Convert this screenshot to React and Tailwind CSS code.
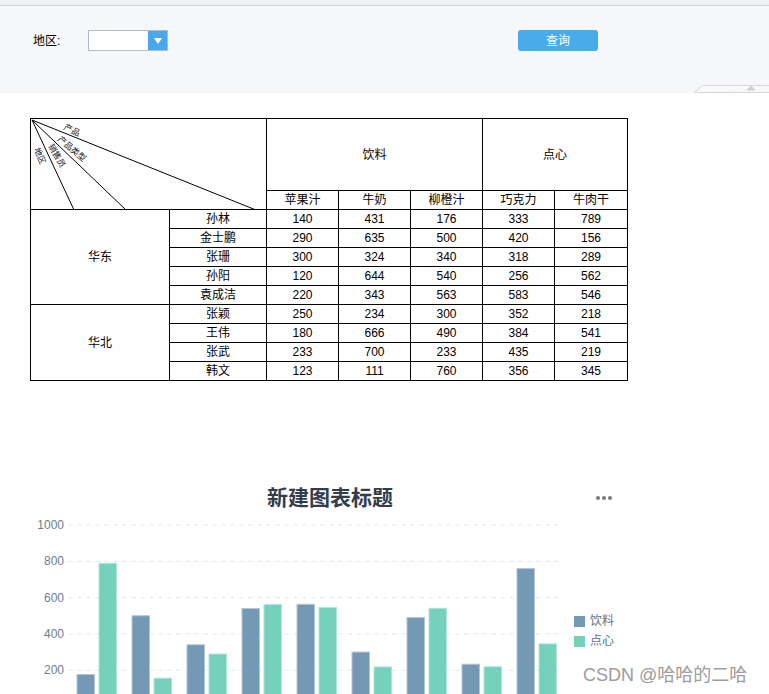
import React from 'react';

const FONT = { fontFamily: '"Liberation Sans", "Noto Sans CJK SC", sans-serif' };

const products = ['苹果汁', '牛奶', '柳橙汁', '巧克力', '牛肉干'];

const regions = [
  {
    name: '华东',
    rows: [
      ['孙林', 140, 431, 176, 333, 789],
      ['金士鹏', 290, 635, 500, 420, 156],
      ['张珊', 300, 324, 340, 318, 289],
      ['孙阳', 120, 644, 540, 256, 562],
      ['袁成洁', 220, 343, 563, 583, 546],
    ],
  },
  {
    name: '华北',
    rows: [
      ['张颖', 250, 234, 300, 352, 218],
      ['王伟', 180, 666, 490, 384, 541],
      ['张武', 233, 700, 233, 435, 219],
      ['韩文', 123, 111, 760, 356, 345],
    ],
  },
];

// chart series: 柳橙汁 -> 饮料, 牛肉干 -> 点心
const drinks = [176, 500, 340, 540, 563, 300, 490, 233, 760];
const snacks = [789, 156, 289, 562, 546, 218, 541, 219, 345];

const ZERO = 194.5;
const SCALE = 0.1815;

function DiagonalHeader() {
  return (
    <svg className="absolute inset-0" width="236" height="91" viewBox="0 0 236 91">
      <line x1="1" y1="1" x2="43" y2="91" stroke="#000" strokeWidth="1" />
      <line x1="1" y1="1" x2="95" y2="91" stroke="#000" strokeWidth="1" />
      <line x1="1" y1="1" x2="225" y2="91" stroke="#000" strokeWidth="1" />
      <g fontSize="8.5" fill="#111" style={FONT}>
        <text x="32" y="10" transform="rotate(26 32 10)">产品</text>
        <text x="26" y="21" transform="rotate(40 26 21)">产品类型</text>
        <text x="17" y="27" transform="rotate(60 17 27)">销售员</text>
        <text x="3" y="30" transform="rotate(68 3 30)">地区</text>
      </g>
    </svg>
  );
}

function DataTable() {
  const cell = 'border border-black text-center p-0';
  return (
    <table className="ml-[30px] mt-[25px] border-collapse table-fixed text-[12px] text-black" style={FONT}>
      <colgroup>
        <col className="w-[139px]" />
        <col className="w-[97px]" />
        <col className="w-[72px]" />
        <col className="w-[72px]" />
        <col className="w-[72px]" />
        <col className="w-[72px]" />
        <col className="w-[73px]" />
      </colgroup>
      <tbody>
        <tr className="h-[72px]">
          <td rowSpan={2} colSpan={2} className={`${cell} relative`}>
            <DiagonalHeader />
          </td>
          <td colSpan={3} className={cell}>饮料</td>
          <td colSpan={2} className={cell}>点心</td>
        </tr>
        <tr className="h-[19px]">
          {products.map((p) => (
            <td key={p} className={cell}>{p}</td>
          ))}
        </tr>
        {regions.map((r) =>
          r.rows.map((row, i) => (
            <tr key={row[0]} className="h-[19px]">
              {i === 0 && (
                <td rowSpan={r.rows.length} className={cell}>{r.name}</td>
              )}
              {row.map((v, j) => (
                <td key={j} className={`${cell} leading-[17px]`}>{v}</td>
              ))}
            </tr>
          ))
        )}
      </tbody>
    </table>
  );
}

function BarChart() {
  const ticks = [1000, 800, 600, 400, 200];
  return (
    <svg width="570" height="200" viewBox="0 0 570 200" className="shrink-0">
      {ticks.map((t) => {
        const y = ZERO - t * SCALE;
        return (
          <g key={t}>
            <line x1="68" y1={y} x2="563" y2={y} stroke="#e3e9f0" strokeWidth="1" strokeDasharray="5 4" />
            <text x="64" y={y + 4} textAnchor="end" fontSize="12" fill="#6e7d8c" style={FONT}>
              {t}
            </text>
          </g>
        );
      })}
      {drinks.map((d, i) => {
        const x = 77 + i * 55;
        const hd = d * SCALE;
        const hs = snacks[i] * SCALE;
        return (
          <g key={i}>
            <rect x={x} y={ZERO - hd} width="17.5" height={hd} fill="#7499b4" stroke="#b3c6d5" strokeWidth="1" />
            <rect x={x + 22} y={ZERO - hs} width="17.5" height={hs} fill="#75d1bb" stroke="#aee6d8" strokeWidth="1" />
          </g>
        );
      })}
    </svg>
  );
}

export default function App() {
  return (
    <div className="relative w-[769px] h-[694px] overflow-hidden bg-white" style={FONT}>
      <div className="h-[6px] bg-[#f0f1f5] border-b border-[#cfd0d5]" />
      <div className="relative h-[87px] bg-[#f6f7f9]">
        <div className="flex items-center pt-[24px] text-[12px]">
          <span className="ml-[33px] w-[55px] text-black">地区:</span>
          <div className="flex h-[21px] w-[80px] border border-[#b5b9cc] bg-white">
            <div className="flex-1" />
            <div className="flex w-[19px] items-center justify-center bg-[#4ba6ea]">
              <svg width="8" height="6" viewBox="0 0 8 6">
                <path d="M0 0h8L4 6z" fill="#fff" />
              </svg>
            </div>
          </div>
          <button
            type="button"
            className="ml-[350px] h-[21px] w-[80px] rounded-[3px] bg-[#4aabeb] text-[12px] text-white"
          >
            查询
          </button>
        </div>
        <svg className="absolute bottom-0 right-0" width="75" height="9" viewBox="0 0 75 9">
          <path d="M0 8.5L9 1.5H75" fill="#fbfbfc" stroke="#d8d8dc" strokeWidth="1" />
          <path d="M0 8.5H75" stroke="#d8d8dc" strokeWidth="1" />
          <path d="M52 6.5l5-5 5 5z" fill="#cfcfd3" />
        </svg>
      </div>

      <DataTable />

      <div className="mt-[103px]">
        <div className="relative h-[28px] w-[660px]">
          <div className="w-[660px] text-center text-[21px] font-bold leading-[28px] text-[#333c4a]">
            新建图表标题
          </div>
          <div className="absolute left-[596px] top-[12px] flex gap-[2px]">
            <span className="h-[4px] w-[4px] rounded-full bg-[#7a7a7a]" />
            <span className="h-[4px] w-[4px] rounded-full bg-[#7a7a7a]" />
            <span className="h-[4px] w-[4px] rounded-full bg-[#7a7a7a]" />
          </div>
        </div>
        <div className="flex">
          <BarChart />
          <div className="ml-[4px] mt-[103px] flex flex-col gap-[8px] text-[12px] text-[#5f7185]">
            <div className="flex items-center gap-[5px] leading-[12px]">
              <span className="h-[11px] w-[11px] bg-[#7499b4]" />
              饮料
            </div>
            <div className="flex items-center gap-[5px] leading-[12px]">
              <span className="h-[11px] w-[11px] bg-[#75d1bb]" />
              点心
            </div>
          </div>
        </div>
      </div>

      <div className="absolute left-[583px] top-[663px] text-[18px] leading-[24px] text-[#9c9c9c] [text-shadow:0_0_2px_#fff]">
        CSDN @哈哈的二哈
      </div>
    </div>
  );
}
